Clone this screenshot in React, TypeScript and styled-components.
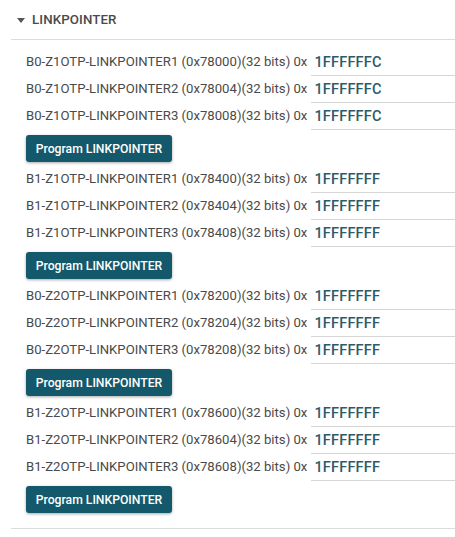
import React from "react";
import styled, { createGlobalStyle } from "styled-components";

const Global = createGlobalStyle`
  html, body { margin: 0; padding: 0; background: #fff; }
  body { font-family: Roboto, "Noto Sans", Arial, sans-serif; }
`;

const Page = styled.div`
  padding: 0 0 8px 11px;
  width: 444px;
`;

const Header = styled.div`
  display: flex;
  align-items: center;
  height: 40px;
  padding-left: 6px;
  box-sizing: border-box;
  border-bottom: 1px solid #dcdcdc;
  gap: 7px;
`;

const Caret = styled.span`
  width: 0;
  height: 0;
  border-left: 4px solid transparent;
  border-right: 4px solid transparent;
  border-top: 5px solid #555;
  margin-top: 1px;
`;

const Title = styled.span`
  font-size: 13.3px;
  font-weight: 500;
  color: #4a4a4a;
  letter-spacing: 0.1px;
`;

const Body = styled.div`
  padding: 9px 0 15px 15px;
  border-bottom: 1px solid #dcdcdc;
  display: flex;
  flex-direction: column;
`;

const Group = styled.div`
  display: flex;
  flex-direction: column;
  margin-bottom: 4px;
  &:last-child { margin-bottom: 0; }
`;

const Row = styled.div`
  display: flex;
  align-items: flex-end;
  height: 27px;
`;

const Label = styled.span`
  font-size: 13.15px;
  color: #4a4a4a;
  line-height: 26px;
  padding-bottom: 1px;
  white-space: nowrap;
`;

const Value = styled.div`
  flex: 1;
  margin-left: 4px;
  height: 26px;
  box-sizing: border-box;
  border-bottom: 1px solid #d6d6d6;
  padding-left: 3px;
  font-size: 14.5px;
  font-weight: 500;
  color: #2b5a6b;
  line-height: 26px;
  letter-spacing: 0.2px;
`;

const Button = styled.button`
  align-self: flex-start;
  margin-top: 5px;
  height: 27px;
  width: 146px;
  border: none;
  border-radius: 3px;
  background: #14596b;
  color: #fff;
  font-family: Roboto, Arial, sans-serif;
  font-size: 12.2px;
  font-weight: 500;
  box-shadow: 0 1px 3px rgba(0, 0, 0, 0.35);
  padding: 0;
  cursor: pointer;
`;

const groups = [
  { p: "B0-Z1", a: ["78000", "78004", "78008"], v: "1FFFFFFC" },
  { p: "B1-Z1", a: ["78400", "78404", "78408"], v: "1FFFFFFF" },
  { p: "B0-Z2", a: ["78200", "78204", "78208"], v: "1FFFFFFF" },
  { p: "B1-Z2", a: ["78600", "78604", "78608"], v: "1FFFFFFF" },
];

export default function App() {
  return (
    <>
      <Global />
      <Page>
        <Header>
          <Caret />
          <Title>LINKPOINTER</Title>
        </Header>
        <Body>
          {groups.map((g) => (
            <Group key={g.p}>
              {g.a.map((addr, i) => (
                <Row key={addr}>
                  <Label>
                    {g.p}OTP-LINKPOINTER{i + 1} (0x{addr})(32 bits) 0x
                  </Label>
                  <Value>{g.v}</Value>
                </Row>
              ))}
              <Button>Program LINKPOINTER</Button>
            </Group>
          ))}
        </Body>
      </Page>
    </>
  );
}
